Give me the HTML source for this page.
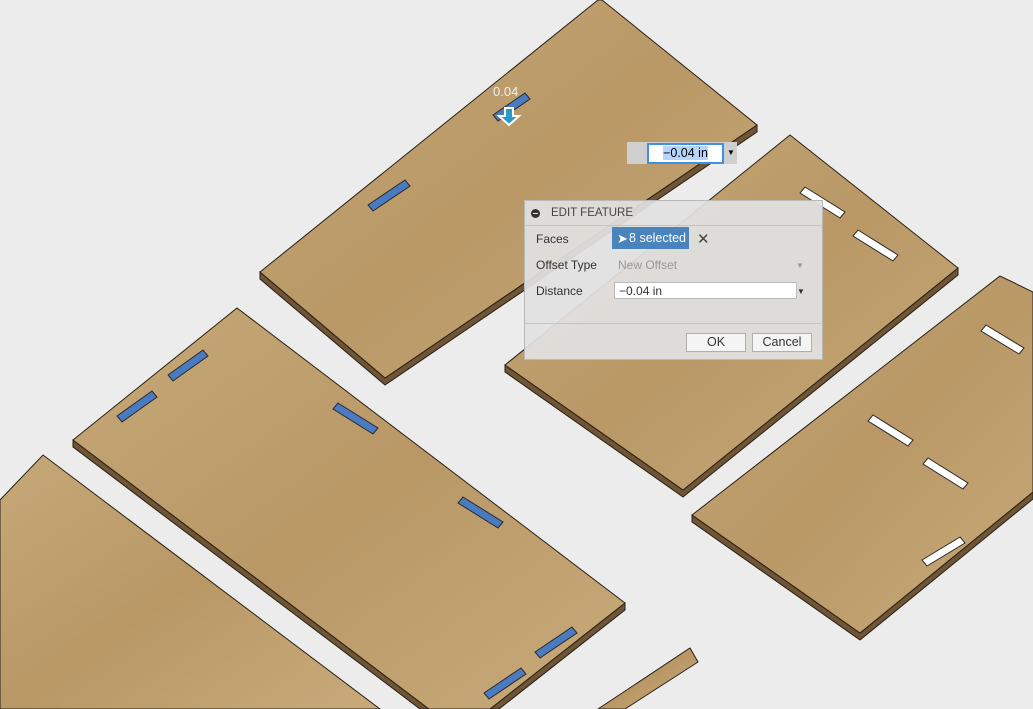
<!DOCTYPE html>
<html><head><style>
body{margin:0;width:1033px;height:709px;overflow:hidden;background:#ececec;font-family:"Liberation Sans",sans-serif;position:relative}
svg{position:absolute;left:0;top:0}
.dlg{position:absolute;left:524px;top:200px;width:297px;height:158px;background:rgba(225,225,225,0.93);border:1px solid #b8b8b8;font-size:12px;color:#333}
.hdr{height:24px;border-bottom:1px solid #c4c4c4;line-height:24px;padding-left:26px;color:#444;font-size:11.5px}
.hdr:before{content:"";position:absolute;left:6px;top:8px;width:9px;height:9px;border-radius:50%;background:#333}
.hdr:after{content:"";position:absolute;left:8px;top:12px;width:5px;height:1px;background:#eee}
.lbl{position:absolute;left:11px}
.foot{position:absolute;left:0;right:0;top:122px;border-top:1px solid #c4c4c4}
.btn{position:absolute;top:132px;height:17px;background:#f4f4f4;border:1px solid #b0b0b0;text-align:center;line-height:17px;font-size:12.5px}
</style></head><body>
<svg width="1033" height="709">
<defs><linearGradient id="w" x1="0" y1="0" x2="1" y2="1"><stop offset="0" stop-color="#c6a878"/><stop offset="0.5" stop-color="#b99866"/><stop offset="1" stop-color="#c8aa7a"/></linearGradient></defs>
<g stroke="#2a2015" stroke-width="1">
<polygon points="260,272 385,378 757,125 757,132 385,385 260,279" fill="#6e5535"/>
<polygon points="505,365 683,490 958,268 958,275 683,497 505,372" fill="#6e5535"/>
<polygon points="692,515 860,633 1033,492 1033,499 860,640 692,522" fill="#6e5535"/>
<polygon points="73,440 429,709 490,709 625,603 625,610 499,709 420,709 73,447" fill="#6e5535"/>
<polygon points="260,272 598,0 602,0 757,125 385,378" fill="url(#w)"/>
<polygon points="505,365 790,135 958,268 683,490" fill="url(#w)"/>
<polygon points="692,515 1000,276 1033,292 1033,492 860,633" fill="url(#w)"/>
<polygon points="73,440 237,308 625,603 490,709 429,709" fill="url(#w)"/>
<polygon points="0,500 43,455 380,709 0,709" fill="url(#w)"/>
<polygon points="598,709 690,648 698,662 625,709" fill="url(#w)"/>
</g>
<g fill="#4a7ac0" stroke="#2a2a2a" stroke-width="1">
<polygon points="368,205 405,180 410,186 373,211"/>
<polygon points="493,115 525,93 530,99 498,121"/>
<polygon points="168,375 203,350 208,356 173,381"/>
<polygon points="117,416 152,391 157,397 122,422"/>
<polygon points="338,403 378,428 373,434 333,409"/>
<polygon points="463,497 503,522 498,528 458,503"/>
<polygon points="535,652 572,627 577,633 540,658"/>
<polygon points="484,693 521,668 526,674 489,699"/>
</g>
<g fill="#fff" stroke="#2a2a2a" stroke-width="1">
<polygon points="805,187 845,212 840,218 800,193"/>
<polygon points="858,230 898,255 893,261 853,236"/>
<polygon points="986,325 1024,348 1019,354 981,331"/>
<polygon points="873,415 913,440 908,446 868,421"/>
<polygon points="928,458 968,483 963,489 923,464"/>
<polygon points="922,560 960,537 965,543 927,566"/>
</g>
<path d="M505,108 h8 v8 h6 l-10,9 l-10,-9 h6z" fill="#2a9bc8" stroke="#fff" stroke-width="2"/>
<text x="493" y="96" fill="#eee" font-size="13" font-family="Liberation Sans">0.04</text>
</svg>
<div style="position:absolute;left:627px;top:142px;width:110px;height:22px;background:#cfcfcf"></div>
<div style="position:absolute;left:647px;top:143px;width:73px;height:17px;background:#fff;border:2px solid #3d8fe8;text-align:center;font-size:12.5px;line-height:17px"><span style="background:#b5d5ff">−0.04 in</span></div>
<div style="position:absolute;left:727px;top:148px;font-size:8px">▼</div>
<div class="dlg">
<div class="hdr">EDIT FEATURE</div>
<div class="lbl" style="top:31px">Faces</div>
<div style="position:absolute;left:87px;top:26px;width:77px;height:22px;background:#4a84bc;color:#fff;line-height:22px;font-size:12.5px;text-align:right;padding-right:3px;box-sizing:border-box">8 selected</div>
<div style="position:absolute;left:92px;top:30px;color:#fff;font-size:13px">➤</div>
<div style="position:absolute;left:172px;top:29px;font-size:15px;color:#444">✕</div>
<div class="lbl" style="top:57px">Offset Type</div>
<div style="position:absolute;left:93px;top:57px;color:#999">New Offset</div>
<div style="position:absolute;left:271px;top:60px;font-size:8px;color:#999">▼</div>
<div class="lbl" style="top:83px">Distance</div>
<div style="position:absolute;left:89px;top:81px;width:183px;background:#fff;border:1px solid #bbb;line-height:16px;padding-left:4px;box-sizing:border-box;height:17px">−0.04 in</div>
<div style="position:absolute;left:272px;top:86px;font-size:8px">▼</div>
<div class="foot"></div>
<div class="btn" style="left:161px;width:58px">OK</div>
<div class="btn" style="left:227px;width:58px">Cancel</div>
</div>
</body></html>
